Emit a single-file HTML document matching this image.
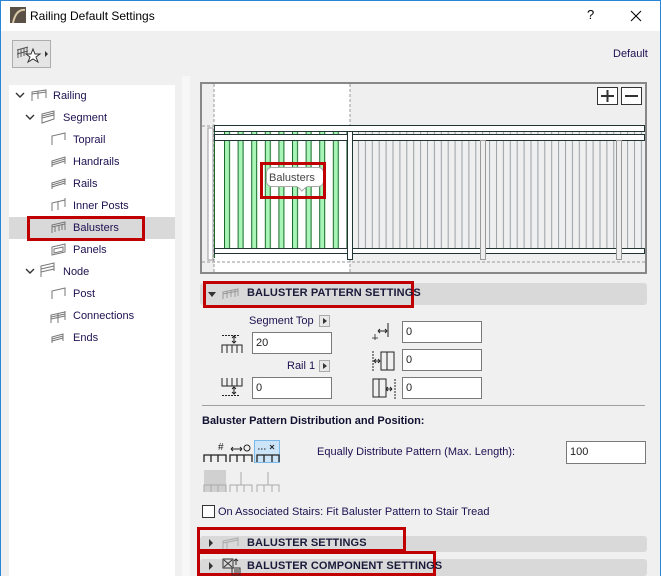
<!DOCTYPE html>
<html><head><meta charset="utf-8"><style>
*{box-sizing:border-box;margin:0;padding:0}
body{width:661px;height:576px;overflow:hidden;background:#f0f0f0;font-family:"Segoe UI","Liberation Sans",sans-serif;font-size:11px;color:#1e1050;position:relative}
.a{position:absolute}
.t{position:absolute;white-space:nowrap;line-height:14px}
.inp{position:absolute;background:#fff;border:1px solid #7a7a7a;padding-left:3px;line-height:20px;font-size:11px;color:#222}
.bar{position:absolute;background:#d9d9d9;border-radius:3px}
.red{position:absolute;border:3px solid #c00000}
.hd{position:absolute;font-weight:bold;font-size:11px;color:#1a1a3a;letter-spacing:0.1px}
.arr{position:absolute;width:11px;height:12px;border:1px solid #aaa;background:#e8e8e8}
.arr:after{content:"";position:absolute;left:3px;top:2px;border-left:4px solid #333;border-top:3px solid transparent;border-bottom:3px solid transparent}
</style></head><body>
<div class="a" style="left:0;top:0;width:661px;height:31px;background:#fff"></div>
<div class="a" style="left:0;top:0;width:1px;height:576px;background:#2b85d6"></div>
<div class="a" style="left:660px;top:0;width:1px;height:576px;background:#2b85d6"></div>
<div class="a" style="left:0;top:0;width:661px;height:1px;background:#2b85d6"></div>
<svg class="a" style="left:10px;top:7px" width="16" height="16"><rect width="16" height="16" fill="#5a5046"/><path d="M3 16 Q6 2 15 3" stroke="#d9c9a8" stroke-width="2" fill="none"/></svg>
<div class="t" style="left:30px;top:9px;font-size:12px;color:#000">Railing Default Settings</div>
<div class="t" style="left:587px;top:8px;font-size:13px;color:#000">?</div>
<svg class="a" style="left:630px;top:10px" width="12" height="12"><path d="M1 1 L11 11 M11 1 L1 11" stroke="#000" stroke-width="1"/></svg>

<div class="a" style="left:12px;top:40px;width:39px;height:28px;border:1px solid #adadad;background:#e5e5e5"></div>
<svg class="a" style="left:16px;top:44px" width="34" height="22"><path d="M1 6 L12 3 M1 10 L12 7 M2 6 V14 M5 5v8 M8 4v8 M11 3v8" stroke="#555" fill="none"/><path d="M17 5 L19 10 L24 10 L20 13 L22 18 L17 15 L12 18 L14 13 L10 10 L15 10 Z" fill="#fff" stroke="#333"/><path d="M29 7 L32 10 L29 13Z" fill="#333"/></svg>
<div class="t" style="left:613px;top:47px;color:#1e1050">Default</div>

<div class="a" style="left:9px;top:85px;width:166px;height:491px;background:#fff"></div>
<div class="a" style="left:182px;top:76px;width:8px;height:500px;background:#f7f7f7"></div>
<div class="a" style="left:9px;top:217px;width:166px;height:22px;background:#d9d9d9"></div>
<div class="red" style="left:27px;top:216px;width:118px;height:25px"></div>

<svg class="a" style="left:0;top:85px" width="175" height="270" fill="none" stroke="#777">
<path d="M16 8 l4 4 4-4 M26 30 l4 4 4-4 M26 184 l4 4 4-4" stroke="#333" stroke-width="1.4"/>
<path d="M32 16 V7 L46 5 V13 M32 9 L46 7 M38 6 V14" />
<path d="M42 38 V29 L54 26 V34 Z M42 31 L54 28 M42 33 L54 30"/>
<path d="M52 60 V51 L65 48 V55"/>
<path d="M52 82 V76 L65 72 V79 M52 78 L65 74 M52 80 L65 76"/>
<path d="M52 104 V98 L65 94 V100 M52 100 L65 96 M52 102 L65 98"/>
<path d="M52 126 V118 L65 115 M58 117 V125 M65 113 V122"/>
<path d="M52 148 V140 L65 137 V145 M52 142 L65 139 M55 141v6 M59 140v6 M62 139v6"/>
<path d="M52 170 V162 L65 159 V167 Z M54 164 L63 162 V166 L54 168Z"/>
<path d="M41 192 V181 L54 178 V186 M41 184 L54 181 M41 187 L54 184"/>
<path d="M52 214 V206 L65 203 V211"/>
<path d="M51 238 V230 L65 227 M51 232 L65 229 M51 234 L65 231 M58 229 V238 M65 226 V235"/>
<path d="M52 258 V252 L63 249 V256 M52 254 L63 251 M52 256 L63 253"/>
</svg>
<div class="t" style="left:53px;top:89px">Railing</div>
<div class="t" style="left:63px;top:111px">Segment</div>
<div class="t" style="left:73px;top:133px">Toprail</div>
<div class="t" style="left:73px;top:155px">Handrails</div>
<div class="t" style="left:73px;top:177px">Rails</div>
<div class="t" style="left:73px;top:199px">Inner Posts</div>
<div class="t" style="left:73px;top:221px">Balusters</div>
<div class="t" style="left:73px;top:243px">Panels</div>
<div class="t" style="left:63px;top:265px">Node</div>
<div class="t" style="left:73px;top:287px">Post</div>
<div class="t" style="left:73px;top:309px">Connections</div>
<div class="t" style="left:73px;top:331px">Ends</div>

<svg class="a" style="left:200px;top:82px" width="448" height="192">
<defs>
<pattern id="g" x="24" y="49" width="13.6" height="118" patternUnits="userSpaceOnUse"><rect x="0" y="0" width="6" height="118" fill="#a8f5b8"/><rect x="0" y="0" width="1" height="118" fill="#1a6b2a"/><rect x="5" y="0" width="1" height="118" fill="#1a6b2a"/></pattern>
<pattern id="gr" x="156" y="49" width="6.9" height="118" patternUnits="userSpaceOnUse"><rect x="2" y="0" width="1" height="118" fill="#9aa0a4"/></pattern>
</defs>
<rect x="1" y="1" width="445" height="190" fill="#efefef" stroke="#888" stroke-width="2"/>
<rect x="14" y="2" width="136" height="188" fill="#fff"/>
<line x1="14" y1="2" x2="14" y2="190" stroke="#999" stroke-dasharray="3,2"/>
<line x1="150" y1="2" x2="150" y2="190" stroke="#999" stroke-dasharray="3,2"/>
<line x1="2" y1="44" x2="14" y2="44" stroke="#999" stroke-dasharray="3,2"/>
<line x1="2" y1="180" x2="445" y2="180" stroke="#999" stroke-dasharray="3,2"/>
<rect x="24" y="49" width="123" height="118" fill="url(#g)"/>
<rect x="153" y="49" width="292" height="118" fill="url(#gr)"/>
<rect x="8" y="46" width="5" height="132" fill="#fff" stroke="#999"/>
<rect x="14" y="50" width="1" height="126" fill="#1a6b2a"/>
<rect x="14.5" y="43.5" width="430" height="6" fill="#fff" stroke="#233"/>
<rect x="14.5" y="52.5" width="430" height="6" fill="#fff" stroke="#233"/>
<rect x="14.5" y="166.5" width="430" height="5" fill="#fff" stroke="#233"/>
<rect x="147.5" y="49.5" width="5" height="128" fill="#fff" stroke="#233"/>
<rect x="280.5" y="58.5" width="5" height="119" fill="#eee" stroke="#999"/>
<rect x="416.5" y="58.5" width="5" height="119" fill="#eee" stroke="#999"/>
<rect x="397.5" y="5.5" width="20" height="17" fill="#fff" stroke="#333"/>
<rect x="421.5" y="5.5" width="20" height="17" fill="#fff" stroke="#333"/>
<path d="M401 14 H414 M407.5 8 V20 M425 14 H438" stroke="#333" stroke-width="2"/>
<rect x="66.5" y="85.5" width="57" height="19" rx="5" fill="#fff" stroke="#aaa"/>
<path d="M97 104 L102 109 L107 104" fill="#fff" stroke="#aaa"/>
<rect x="97.5" y="103" width="9" height="2" fill="#fff"/>
<text x="69" y="99" font-family="Segoe UI, Liberation Sans, sans-serif" font-size="11" fill="#444">Balusters</text>
</svg>
<div class="red" style="left:260px;top:162px;width:66px;height:37px"></div>

<div class="bar" style="left:200px;top:283px;width:447px;height:22px"></div>
<div class="red" style="left:203px;top:281px;width:211px;height:27px"></div>
<div class="a" style="left:208px;top:292px;border-top:5px solid #333;border-left:4px solid transparent;border-right:4px solid transparent"></div>
<svg class="a" style="left:222px;top:287px" width="18" height="14" fill="none" stroke="#999"><path d="M1 12 V5 L16 2 V9 M1 7 L16 4 M5 4v7 M9 3v7 M13 3v7"/></svg>
<div class="hd" style="left:247px;top:287px">BALUSTER PATTERN SETTINGS</div>

<div class="t" style="left:249px;top:314px">Segment Top</div>
<div class="arr" style="left:319px;top:315px"></div>
<div class="inp" style="left:252px;top:332px;width:80px;height:22px">20</div>
<div class="t" style="left:287px;top:359px">Rail 1</div>
<div class="arr" style="left:319px;top:360px"></div>
<div class="inp" style="left:252px;top:377px;width:80px;height:22px">0</div>
<svg class="a" style="left:220px;top:333px" width="26" height="70" fill="none" stroke="#222">
<path d="M2 2.5 H20" stroke-dasharray="2,1"/><path d="M14 3 V10 M12 5 l2-2 2 2 M12 8 l2 2 2-2"/>
<path d="M2 20 V12 H22 V20 M7 12v8 M12 12v8 M17 12v8"/>
<path d="M2 45 V53 H22 V45 M7 45v8 M12 45v8 M17 45v8"/>
<path d="M14 54 V61 M12 56 l2-2 2 2 M12 59 l2 2 2-2"/><path d="M2 62.5 H20" stroke-dasharray="2,1"/>
</svg>
<svg class="a" style="left:372px;top:321px" width="28" height="80" fill="none" stroke="#222">
<path d="M16 2 V16 M6 10 H15 M6 10 l2-2 M6 10 l2 2 M15 10 l-2-2 M15 10 l-2 2"/><path d="M3 13 v6 M0 17 h6" stroke-width="0.8"/>
<path d="M1 30 V50" stroke-dasharray="2,1"/><path d="M2 40 H8 M2 40 l2-2 M2 40 l2 2 M8 40 l-2-2 M8 40 l-2 2"/><path d="M9 31 H22 V49 H9 Z M15 31 V49"/>
<path d="M1 58 H14 V76 H1 Z M7 58 V76"/><path d="M14 68 H20 M14 68 l2-2 M14 68 l2 2 M20 68 l-2-2 M20 68 l-2 2"/><path d="M23 58 V78" stroke-dasharray="2,1"/>
</svg>
<div class="inp" style="left:402px;top:321px;width:80px;height:22px">0</div>
<div class="inp" style="left:402px;top:349px;width:80px;height:22px">0</div>
<div class="inp" style="left:402px;top:377px;width:80px;height:22px">0</div>

<div class="a" style="left:202px;top:405px;width:443px;height:1px;background:#a0a0a0"></div>
<div class="t" style="left:202px;top:414px;font-weight:bold;color:#101030">Baluster Pattern Distribution and Position:</div>

<div class="a" style="left:254px;top:440px;width:26px;height:23px;background:#cce4f7;border:1px solid #7ab8e8"></div>
<svg class="a" style="left:202px;top:440px" width="80" height="60" fill="none" stroke="#222">
<path d="M2 22 V15 H24 V22 M9 15v7 M16 15v7 M28 22 V15 H50 V22 M35 15v7 M42 15v7 M55 22 V15 H77 V22 M62 15v7 M70 15v7" stroke-width="1.3"/>
<text x="16" y="10" font-size="10" font-family="Liberation Sans" fill="#222" stroke="none">#</text>
<path d="M29 9 H40 M29 9 l2-2 M29 9 l2 2 M40 9 l-2-2 M40 9 l-2 2"/><circle cx="45" cy="8" r="3"/>
<path d="M56 9 H65" stroke-dasharray="1.5,1.5"/><path d="M68 5 l4 4 M72 5 l-4 4"/>
<g stroke="#aaa"><rect x="2" y="30" width="22" height="22" fill="#d0d0d0" stroke="none"/><path d="M2 52 V45 H24 V52 M9 45v7 M16 45v7 M28 52 V45 H50 V52 M35 45v7 M42 45v7 M55 52 V45 H77 V52 M62 45v7 M70 45v7 M39 32 V45 M66 32 V45"/></g>
</svg>
<div class="t" style="left:317px;top:445px">Equally Distribute Pattern (Max. Length):</div>
<div class="inp" style="left:566px;top:441px;width:80px;height:23px">100</div>

<div class="a" style="left:202px;top:505px;width:13px;height:13px;border:1px solid #333;background:#fff"></div>
<div class="t" style="left:218px;top:505px">On Associated Stairs: Fit Baluster Pattern to Stair Tread</div>

<div class="bar" style="left:200px;top:536px;width:447px;height:16px"></div>
<div class="red" style="left:197px;top:527px;width:209px;height:25px"></div>
<div class="a" style="left:209px;top:539px;border-left:4px solid #333;border-top:4px solid transparent;border-bottom:4px solid transparent"></div>
<svg class="a" style="left:222px;top:536px" width="18" height="14" fill="none" stroke="#aaa"><path d="M1 13 V5 L16 2 V10 M1 7 L16 4 M5 6v7"/></svg>
<div class="hd" style="left:247px;top:537px">BALUSTER SETTINGS</div>

<div class="bar" style="left:200px;top:559px;width:447px;height:17px"></div>
<div class="red" style="left:197px;top:551px;width:239px;height:25px"></div>
<div class="a" style="left:209px;top:562px;border-left:4px solid #333;border-top:4px solid transparent;border-bottom:4px solid transparent"></div>
<svg class="a" style="left:222px;top:557px" width="20" height="19" fill="none" stroke="#333"><rect x="1" y="2" width="10" height="9"/><path d="M2 3 l8 7 M10 3 l-8 7"/><rect x="10" y="11" width="8" height="7"/><path d="M12 13h5 M12 15h5 M14 2v6 M12 4l2-2 2 2"/></svg>
<div class="hd" style="left:247px;top:560px">BALUSTER COMPONENT SETTINGS</div>
</body></html>
